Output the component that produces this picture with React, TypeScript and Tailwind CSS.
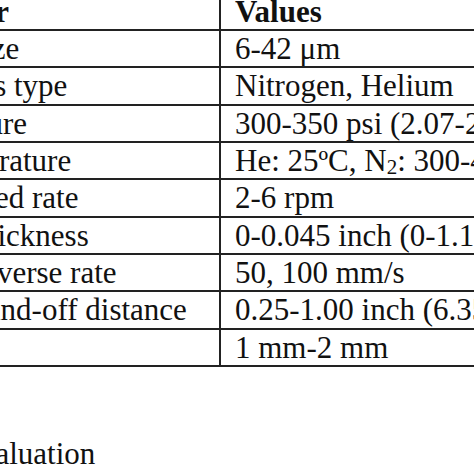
const rows = [
  { param: 'Size', shift: '-ml-[34px]', value: <>6-42 μm</> },
  { param: 'Gas type', shift: '-ml-[42px]', value: <>Nitrogen, Helium</> },
  { param: 'Pressure', shift: '-ml-[78px]', value: <>300-350 psi (2.07-2.41 MPa)</> },
  {
    param: 'Temperature',
    shift: '-ml-[85px]',
    value: (
      <>
        He: 25ºC, N<sub className="text-[21px] relative top-[3px] align-baseline">2</sub>: 300-400ºC
      </>
    ),
  },
  { param: 'Feed rate', shift: '-ml-[36px]', value: <>2-6 rpm</> },
  { param: 'Thickness', shift: '-ml-[37px]', value: <>0-0.045 inch (0-1.14 mm)</> },
  { param: 'Traverse rate', shift: '-ml-[45px]', value: <>50, 100 mm/s</> },
  { param: 'Stand-off distance', shift: '-ml-[39px]', value: <>0.25-1.00 inch (6.35-25.4 mm)</> },
  { param: '', shift: '', value: <>1 mm-2 mm</> },
];

export default function App() {
  return (
    <div className="w-[474px] h-[474px] overflow-hidden bg-white text-[#111] font-['Liberation_Serif',serif] text-[31px] leading-[35px]">
      <div className="w-[700px]">
        {/* header row, top half cut off */}
        <div className="flex h-[31px] border-b-2 border-[#222]">
          <div className="w-[221px] shrink-0 border-r-2 border-[#222] whitespace-nowrap">
            <div className="-mt-[6px] -ml-[132px] font-bold">Parameter</div>
          </div>
          <div className="pl-[14px] whitespace-nowrap">
            <div className="-mt-[6px] font-bold">Values</div>
          </div>
        </div>

        {rows.map((r, i) => (
          <div key={i} className="flex h-[37.33px] border-b-2 border-[#222]">
            <div className="w-[221px] shrink-0 border-r-2 border-[#222] overflow-hidden whitespace-nowrap">
              <div className={r.shift}>{r.param}</div>
            </div>
            <div className="pl-[14px] whitespace-nowrap">{r.value}</div>
          </div>
        ))}
      </div>

      <div className="mt-[69px] -ml-[39px] whitespace-nowrap">Evaluation</div>
    </div>
  );
}
